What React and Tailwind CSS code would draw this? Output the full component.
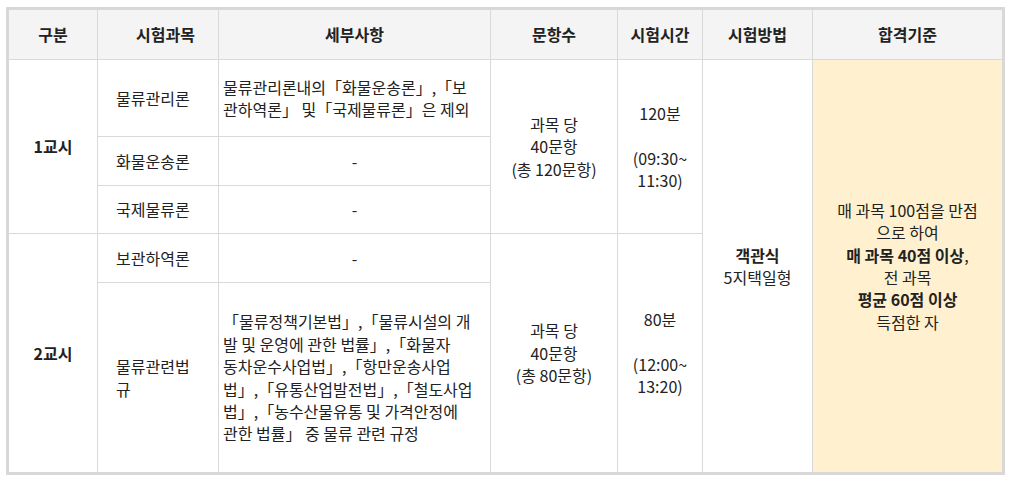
import React from "react";

const line = "border-[#d9d9d9]";

function Head({ children, className = "" }) {
  return (
    <div
      className={`flex items-center justify-center border-b bg-[#f4f4f4] font-bold ${line} ${className}`}
    >
      {children}
    </div>
  );
}

export default function App() {
  return (
    <div className="min-h-screen bg-white pl-[6px] pt-[7px] font-['Noto_Sans_CJK_KR','Noto_Sans',sans-serif] text-[16px] leading-[22.4px] text-[#222]">
      <div
        className={`grid w-[999px] grid-cols-[89px_121px_272px_127px_85px_110px_189px] grid-rows-[50px_77px_49px_48px_49px_189px] border-[3px] border-[#d8d8d8]`}
      >
        {/* header */}
        <Head className="col-start-1 row-start-1 border-r">구분</Head>
        <Head className="col-start-2 row-start-1 border-r pl-[15px]">시험과목</Head>
        <Head className="col-start-3 row-start-1 border-r">세부사항</Head>
        <Head className="col-start-4 row-start-1 border-r">문항수</Head>
        <Head className="col-start-5 row-start-1 border-r">시험시간</Head>
        <Head className="col-start-6 row-start-1 border-r">시험방법</Head>
        <Head className="col-start-7 row-start-1">합격기준</Head>

        {/* 1교시 */}
        <div className={`col-start-1 row-start-2 row-span-3 flex items-center justify-center border-r border-b font-bold ${line}`}>
          1교시
        </div>
        <div className={`col-start-2 row-start-2 flex items-center border-r border-b pl-[18px] ${line}`}>
          물류관리론
        </div>
        <div className={`col-start-3 row-start-2 flex flex-col justify-center whitespace-nowrap border-r border-b pl-[4px] ${line}`}>
          <span>물류관리론내의「화물운송론」,「보</span>
          <span>관하역론」 및「국제물류론」은 제외</span>
        </div>
        <div className={`col-start-4 row-start-2 row-span-3 flex flex-col items-center justify-center border-r border-b text-center ${line}`}>
          <span>과목 당</span>
          <span>40문항</span>
          <span>(총 120문항)</span>
        </div>
        <div className={`col-start-5 row-start-2 row-span-3 flex flex-col items-center justify-center border-r border-b text-center ${line}`}>
          <span>120분</span>
          <span>&nbsp;</span>
          <span>(09:30~</span>
          <span>11:30)</span>
        </div>
        <div className={`col-start-6 row-start-2 row-span-5 flex flex-col items-center justify-center border-r text-center ${line}`}>
          <span className="font-bold">객관식</span>
          <span>5지택일형</span>
        </div>
        <div className="col-start-7 row-start-2 row-span-5 flex flex-col items-center justify-center bg-[#fff1cf] text-center">
          <span>매 과목 100점을 만점</span>
          <span>으로 하여</span>
          <span>
            <b>매 과목 40점 이상</b>,
          </span>
          <span>전 과목</span>
          <span className="font-bold">평균 60점 이상</span>
          <span>득점한 자</span>
        </div>

        <div className={`col-start-2 row-start-3 flex items-center border-r border-b pl-[18px] ${line}`}>
          화물운송론
        </div>
        <div className={`col-start-3 row-start-3 flex items-center justify-center border-r border-b ${line}`}>
          -
        </div>
        <div className={`col-start-2 row-start-4 flex items-center border-r border-b pl-[18px] ${line}`}>
          국제물류론
        </div>
        <div className={`col-start-3 row-start-4 flex items-center justify-center border-r border-b ${line}`}>
          -
        </div>

        {/* 2교시 */}
        <div className={`col-start-1 row-start-5 row-span-2 flex items-center justify-center border-r font-bold ${line}`}>
          2교시
        </div>
        <div className={`col-start-2 row-start-5 flex items-center border-r border-b pl-[18px] ${line}`}>
          보관하역론
        </div>
        <div className={`col-start-3 row-start-5 flex items-center justify-center border-r border-b ${line}`}>
          -
        </div>
        <div className={`col-start-4 row-start-5 row-span-2 flex flex-col items-center justify-center border-r text-center ${line}`}>
          <span>과목 당</span>
          <span>40문항</span>
          <span>(총 80문항)</span>
        </div>
        <div className={`col-start-5 row-start-5 row-span-2 flex flex-col items-center justify-center border-r text-center ${line}`}>
          <span>80분</span>
          <span>&nbsp;</span>
          <span>(12:00~</span>
          <span>13:20)</span>
        </div>

        <div className={`col-start-2 row-start-6 flex flex-col justify-center border-r pl-[18px] ${line}`}>
          <span>물류관련법</span>
          <span>규</span>
        </div>
        <div className={`col-start-3 row-start-6 flex flex-col justify-center whitespace-nowrap border-r pl-[4px] ${line}`}>
          <span>「물류정책기본법」,「물류시설의 개</span>
          <span>발 및 운영에 관한 법률」,「화물자</span>
          <span>동차운수사업법」,「항만운송사업</span>
          <span>법」,「유통산업발전법」,「철도사업</span>
          <span>법」,「농수산물유통 및 가격안정에</span>
          <span>관한 법률」 중 물류 관련 규정</span>
        </div>
      </div>
    </div>
  );
}
